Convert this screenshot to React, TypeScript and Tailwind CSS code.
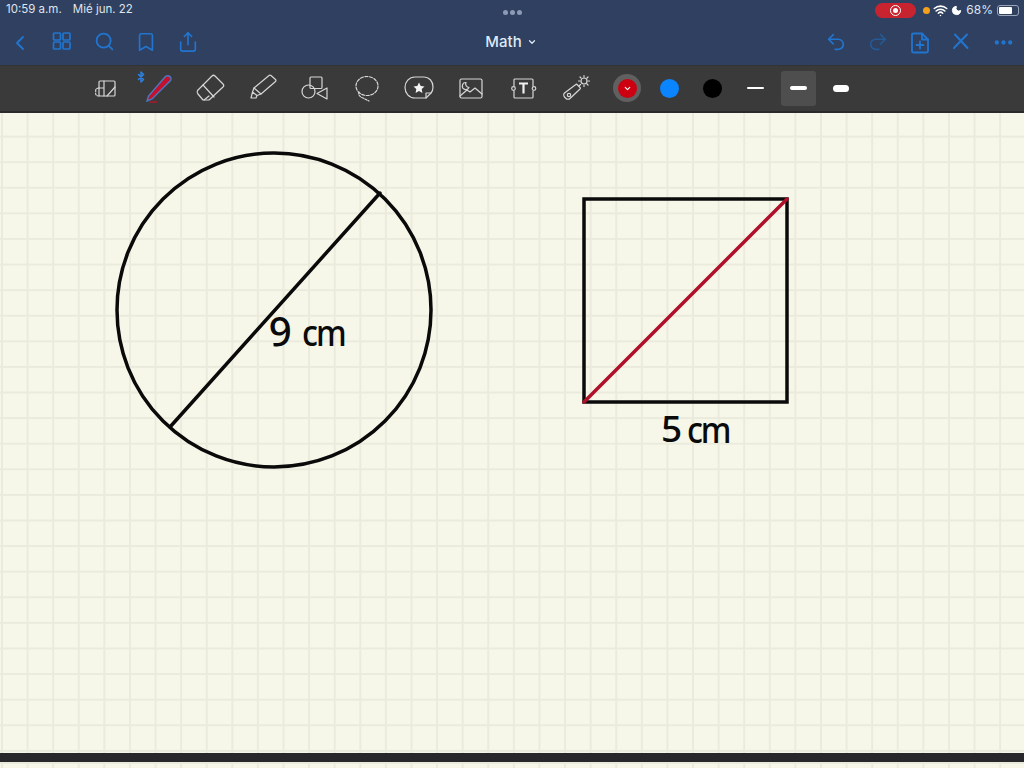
import { ChevronDown, ChevronLeft, Search, Bookmark, Share, Undo2, Redo2, Wifi, Moon, Bluetooth, Ellipsis } from "lucide-react";

const gridBg =
  "bg-[#f6f6e9] bg-[linear-gradient(to_right,#ebebdd_1.5px,transparent_1.5px),linear-gradient(to_bottom,#ebebdd_1.5px,transparent_1.5px)] bg-[size:25.6px_25.6px]";

function Ico({ children }: { children: React.ReactNode }) {
  return (
    <svg viewBox="0 0 32 32" className="w-8 h-8" fill="none" stroke="#d6d6d6" strokeWidth="1.2" strokeLinejoin="round" strokeLinecap="round">
      {children}
    </svg>
  );
}

const tools = [
  // page layout
  <Ico key="page">
    <rect x="10" y="9" width="16" height="15" rx="1" />
    <path d="M15 9v15M10 16h5M26 15l-8 9" />
    <path d="M10 16c-3 0-4 2-3 4-1 2 0 4 3 4" strokeDasharray="2 1.5" />
  </Ico>,
  // pen
  <svg key="pen" viewBox="0 0 32 32" className="w-8 h-8">
    <path d="M27 4c2 1 2.500 3 1.500 4.500L10 27l-5 2 1.500-5L23 5c1-1 2.500-1.500 4-1Z" fill="#c5102c" stroke="#4a78c0" strokeWidth="1.4" />
    <path d="M7 30h8" stroke="#c5102c" strokeWidth="1.2" />
  </svg>,
  // eraser
  <Ico key="eraser">
    <path d="M17 4c1-1 2-1 3 0l8 8c1 1 1 2 0 3L14 28H8l-5-6c-1-1-1-3 0-4Z" />
    <path d="M8 13l11 12" />
    <path d="M9 28l5-4" />
  </Ico>,
  // highlighter
  <Ico key="marker">
    <path d="M22 3.500c.6-.6 1.300-.6 2 0l4.500 4c.6.6.6 1.300 0 2L14 22l-7-6Z" />
    <path d="M7 16l-1.500 4 4.500 3.500 4-1.500M5.500 20 4 26h5l1-2.500" />
  </Ico>,
  // shapes
  <Ico key="shapes">
    <rect x="11" y="5" width="12" height="11.500" rx="1" />
    <circle cx="9.500" cy="19.500" r="6.500" />
    <path d="M28 16v11l-10-5.500Z" />
  </Ico>,
  // lasso
  <Ico key="lasso">
    <ellipse cx="16" cy="14" rx="11" ry="9.500" strokeDasharray="3 1.600" />
    <path d="M8 20c-1 3 1 5 4 6l6 3" strokeDasharray="2 1.400" />
  </Ico>,
  // sticker
  <Ico key="sticker">
    <path d="M12 5h9c5 0 9 4 9 10 0 3-1 5-2 6l-5 5H12C6 26 2 21 2 15.500S6 5 12 5Z" />
    <path d="M28 21h-5v5" />
    <path d="M16 10.500l1.700 3.500 3.800.5-2.800 2.600.7 3.800-3.400-1.900-3.400 1.900.7-3.800-2.800-2.600 3.800-.5Z" fill="#f4f4f4" stroke="none" />
  </Ico>,
  // image
  <Ico key="image">
    <rect x="5" y="7" width="22" height="19" rx="1.500" />
    <path d="M5 24l7-6 3 2 5-4 7 6" />
    <path d="M11 10.500a3.500 3.500 0 1 0 3 5 3.500 3.500 0 0 1-3-5Z" />
  </Ico>,
  // text box
  <Ico key="text">
    <path d="M7 14v-6c0-.6.4-1 1-1h17c.6 0 1 .4 1 1v6M7 19v6c0 .6.4 1 1 1h17c.6 0 1-.4 1-1v-6" />
    <circle cx="6.500" cy="16.500" r="1.800" />
    <circle cx="27" cy="16.500" r="1.800" />
    <path d="M12 11.500h9M16.500 11.500v10" stroke="#f0f0f0" strokeWidth="2.200" strokeLinecap="butt" />
  </Ico>,
  // laser pointer
  <Ico key="laser">
    <path d="M17.500 12l3.500 3.500c.5.5.5 1 0 1.500L11 26.500c-1 1-3 1-4 0l-1.500-1.500c-1-1-1-3 0-4Z" />
    <circle cx="10" cy="23" r="1.700" />
    <circle cx="25" cy="9" r="3" />
    <path d="M25 3.500v1.500M25 13v1.500M19.500 9H21M29 9h1.500M21 5l1 1M28 12l1 1M29 5l-1 1M20.500 13.500l1-1" />
  </Ico>,
];

export default function App() {
  return (
    <div className="flex flex-col h-[768px] w-[1024px] overflow-hidden font-[Inter,sans-serif]">
      <header className="h-[65px] bg-[#2f4060] shrink-0">
        <div className="h-[19px] pt-[1px] grid grid-cols-[1fr_auto_1fr] items-center text-[11.500px] text-[#dfe5ee] pl-[6px] pr-[5px]">
          <div className="flex gap-[11px]">
            <span>10:59 a.m.</span>
            <span>Mié jun. 22</span>
          </div>
          <div className="flex gap-[2px] pt-[4px] -ml-[1px]">
            <div className="w-[5px] h-[5px] rounded-full bg-[#8c9ab5]" />
            <div className="w-[5px] h-[5px] rounded-full bg-[#8c9ab5]" />
            <div className="w-[5px] h-[5px] rounded-full bg-[#8c9ab5]" />
          </div>
          <div className="flex items-center justify-end">
            <div className="w-[41px] h-[15px] rounded-full bg-[#c8242f] flex items-center justify-center">
              <div className="w-[11px] h-[11px] rounded-full border border-white flex items-center justify-center">
                <div className="w-[5px] h-[5px] rounded-full bg-white" />
              </div>
            </div>
            <div className="w-[7px] h-[7px] rounded-full bg-[#f5a01c] ml-[7px]" />
            <Wifi className="w-[15px] h-[15px] text-white ml-[3px]" strokeWidth={2.5} />
            <Moon className="w-[11px] h-[11px] text-white fill-white ml-[3px]" />
            <span className="ml-[4px] text-[12px]">68%</span>
            <div className="ml-[4px] w-[22px] h-[11px] rounded-[3px] border border-[#9aa5b8] p-[1px]">
              <div className="h-full w-[13px] bg-white rounded-[1px]" />
            </div>
          </div>
        </div>
        <nav className="h-[46px] pt-[2px] grid grid-cols-[1fr_auto_1fr] items-center text-[#2275cf]">
          <div className="flex -ml-[1px]">
            <div className="w-[42px] flex justify-center"><ChevronLeft className="w-6 h-6" strokeWidth={1.9} /></div>
            <div className="w-[42px] flex justify-center">
              <svg viewBox="0 0 20 20" className="w-5 h-5" fill="none" stroke="currentColor" strokeWidth="1.700">
                <rect x="1.500" y="2" width="7" height="7" rx="1" />
                <rect x="11" y="2" width="7" height="7" rx="1" />
                <rect x="1.500" y="11" width="7" height="7" rx="1" />
                <rect x="11" y="11" width="7" height="7" rx="1" />
              </svg>
            </div>
            <div className="w-[42px] flex justify-center"><Search className="w-[21px] h-[21px]" strokeWidth={2} /></div>
            <div className="w-[42px] flex justify-center"><Bookmark className="w-[22px] h-[22px]" strokeWidth={1.8} /></div>
            <div className="w-[42px] flex justify-center"><Share className="w-[22px] h-[22px]" strokeWidth={1.8} /></div>
          </div>
          <div className="flex items-center gap-[5px] text-[#dfe8f5] text-[15px] font-medium -mt-[2px] -ml-[2px]">
            <span>Math</span>
            <ChevronDown className="w-[10px] h-[10px]" strokeWidth={3} />
          </div>
          <div className="flex justify-end">
            <div className="w-[42px] flex justify-center"><Undo2 className="w-[22px] h-[22px]" strokeWidth={1.8} /></div>
            <div className="w-[42px] flex justify-center"><Redo2 className="w-[22px] h-[22px] text-[#245a96]" strokeWidth={1.8} /></div>
            <div className="w-[41px] flex justify-center">
              <svg viewBox="0 0 24 24" className="w-[24px] h-[24px]" fill="none" stroke="currentColor" strokeWidth="1.800" strokeLinejoin="round" strokeLinecap="round">
                <path d="M5 2.500h9l6 6V20c0 1-.6 1.500-1.500 1.500h-13C4.600 21.500 4 21 4 20V3.500c0-.6.4-1 1-1Z" />
                <path d="M14 2.500V8.500h6M12 10.500v7M8.500 14h7" />
              </svg>
            </div>
            <div className="w-[42px] flex justify-center">
              <svg viewBox="0 0 20 20" className="w-5 h-5" fill="none" stroke="currentColor" strokeWidth="2" strokeLinecap="round">
                <path d="M4 3.500 16.500 17M16 3.500 3 17" />
              </svg>
            </div>
            <div className="w-[42px] flex justify-center"><Ellipsis className="w-[23px] h-[23px]" strokeWidth={2.5} /></div>
          </div>
        </nav>
      </header>

      <div className="h-[48px] shrink-0 bg-[#3a3a3a] border-t border-[#333] border-b-2 border-b-[#2a2a2c] flex items-center pl-[79px] pb-[1px]">
        {tools.map((icon, i) => (
          <div key={i} className={`relative h-full flex items-center justify-center ${i === 1 ? "w-[54px]" : "w-[52px]"}`}>
            {i === 1 && <Bluetooth className="absolute left-[4px] top-[5px] w-[12px] h-[12px] text-[#2b80e0]" strokeWidth={3} />}
            {icon}
          </div>
        ))}
        <div className="w-[52px] h-full flex items-center justify-center">
          <div className="w-[28px] h-[28px] rounded-full bg-[#606060] flex items-center justify-center">
            <div className="w-[19px] h-[19px] rounded-full bg-[#cc0010] flex items-center justify-center">
              <ChevronDown className="w-[9px] h-[9px] text-white" strokeWidth={3} />
            </div>
          </div>
        </div>
        <div className="w-[32px] flex justify-center">
          <div className="w-[19px] h-[19px] rounded-full bg-[#0a84ff]" />
        </div>
        <div className="w-[54px] flex justify-center">
          <div className="w-[19px] h-[19px] rounded-full bg-black" />
        </div>
        <div className="w-[32px] flex justify-center">
          <div className="w-[17px] h-[2px] bg-white rounded-full" />
        </div>
        <div className="w-[35px] h-[35px] ml-[10px] rounded-[3px] bg-[#4e4e4e] flex items-center justify-center">
          <div className="w-[17px] h-[4px] bg-white rounded-full" />
        </div>
        <div className="w-[16px] h-[7px] ml-[17px] bg-white rounded-full" />
      </div>

      <main className={`relative flex-1 ${gridBg} bg-[position:1px_-3px]`}>
        <svg viewBox="0 113 1024 640" className="absolute inset-0 w-full h-full" fill="none" strokeLinecap="round">
          <circle cx="274" cy="310" r="157" stroke="#0a0a0a" strokeWidth="3.500" />
          <path d="M380 193 170 427" stroke="#0a0a0a" strokeWidth="3.500" />
          <rect x="584" y="199" width="203" height="203" stroke="#0a0a0a" strokeWidth="3.500" />
          <path d="M584 402 787 199" stroke="#b0102a" strokeWidth="3.500" />
        </svg>
        <div className="absolute left-[269px] top-[194px] text-[40px] leading-[48px] font-medium text-[#0a0a0a] font-['Noto_Sans',sans-serif] -rotate-3">
          9
        </div>
        <div className="absolute left-[302px] top-[196px] text-[36px] leading-[48px] font-medium tracking-[-2px] text-[#0a0a0a] font-['Noto_Sans',sans-serif] origin-left scale-x-[0.9]">
          cm
        </div>
        <div className="absolute left-[661px] top-[291px] text-[37px] leading-[48px] font-medium text-[#0a0a0a] font-['Noto_Sans',sans-serif]">
          5
        </div>
        <div className="absolute left-[687px] top-[293px] text-[36px] leading-[48px] font-medium tracking-[-2.500px] text-[#0a0a0a] font-['Noto_Sans',sans-serif] origin-left scale-x-[0.9]">
          cm
        </div>
      </main>

      <div className="h-[9px] shrink-0 bg-[#28282c]" />
      <div className={`h-[6px] shrink-0 ${gridBg} bg-[position:1px_0px]`} />
    </div>
  );
}
